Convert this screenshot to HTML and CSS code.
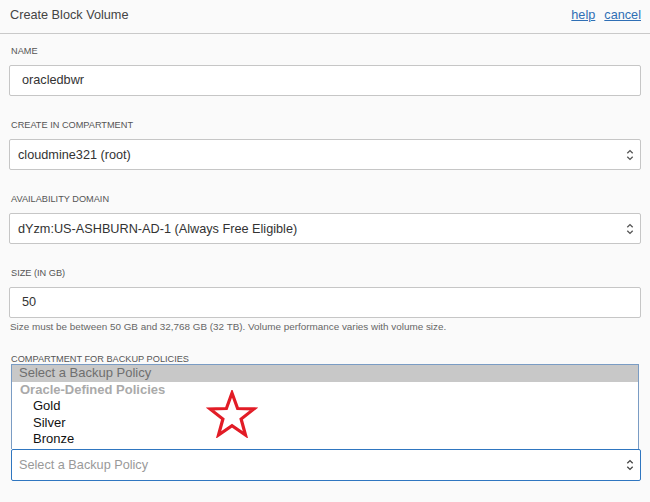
FILE: index.html
```html
<!DOCTYPE html>
<html lang="en">
<head>
    <meta charset="UTF-8">
    <meta name="viewport" content="width=device-width, initial-scale=1.0">
    <title>Create Block Volume</title>
    <link rel="stylesheet" href="styles.css">
</head>
<body>
    <div class="panel">
        <div class="panel-header">
            <p class="panel-title">Create Block Volume</p>
            <div class="header-links">
                <a href="#" class="link">help</a>
                <a href="#" class="link">cancel</a>
            </div>
        </div>
        <form class="form">
            <div class="field">
                <label class="field-label">Name</label>
                <div class="text-input">oracledbwr</div>
            </div>
            <div class="field">
                <label class="field-label">Create in Compartment</label>
                <div class="select-box">
                    <span>cloudmine321 (root)</span>
                    <svg class="chevrons" width="8" height="14" viewBox="0 0 8 14">
                        <path d="M1.3 5.3 L4 2.6 L6.7 5.3 M1.3 8.7 L4 11.4 L6.7 8.7" fill="none" stroke="#555" stroke-width="1.3"/>
                    </svg>
                </div>
            </div>
            <div class="field">
                <label class="field-label">Availability Domain</label>
                <div class="select-box">
                    <span>dYzm:US-ASHBURN-AD-1 (Always Free Eligible)</span>
                    <svg class="chevrons" width="8" height="14" viewBox="0 0 8 14">
                        <path d="M1.3 5.3 L4 2.6 L6.7 5.3 M1.3 8.7 L4 11.4 L6.7 8.7" fill="none" stroke="#555" stroke-width="1.3"/>
                    </svg>
                </div>
            </div>
            <div class="field">
                <label class="field-label">Size (in GB)</label>
                <div class="text-input">50</div>
                <p class="help-text">Size must be between 50 GB and 32,768 GB (32 TB). Volume performance varies with volume size.</p>
            </div>
            <div class="field backup-field">
                <label class="field-label">Compartment for Backup Policies</label>
                <div class="picker">
                    <ul class="option-list">
                        <li class="option selected">Select a Backup Policy</li>
                        <li class="option group">Oracle-Defined Policies</li>
                        <li class="option sub">Gold</li>
                        <li class="option sub">Silver</li>
                        <li class="option sub">Bronze</li>
                    </ul>
                    <svg class="star" width="52" height="48" viewBox="0 0 52 48">
                        <polygon points="26,3 31.6,18.5 48,18.9 35.1,29 39.5,45 26,35.6 12.5,45 16.9,29 4,18.9 20.4,18.5" fill="none" stroke="#e21c26" stroke-width="3.2"/>
                    </svg>
                    <div class="select-box focused">
                        <span class="placeholder">Select a Backup Policy</span>
                        <svg class="chevrons" width="8" height="14" viewBox="0 0 8 14">
                            <path d="M1.3 5.3 L4 2.6 L6.7 5.3 M1.3 8.7 L4 11.4 L6.7 8.7" fill="none" stroke="#444" stroke-width="1.3"/>
                        </svg>
                    </div>
                </div>
            </div>
        </form>
    </div>
</body>
</html>
```

FILE: styles.css
```css
body {
    margin: 0;
    background-color: #fafafa;
    color: #333;
    font-family: "Liberation Sans", Arial, sans-serif;
}
.panel-header {
    display: flex;
    justify-content: space-between;
    align-items: center;
    height: 33px;
    padding: 0 9px 0 10px;
    border-bottom: 1px solid #c9c9c9;
}
.panel-title {
    margin: 0;
    font-size: 12.7px;
    color: #444;
    padding-bottom: 4px;
}
.header-links {
    display: flex;
    gap: 9px;
    padding-bottom: 4px;
}
.link {
    font-size: 12.7px;
    color: #2f6fb5;
    text-decoration: underline;
}
.form {
    padding: 11px 9px 0 9px;
}
.field {
    margin-bottom: 23px;
}
.field-label {
    display: block;
    font-size: 9.2px;
    line-height: 12px;
    text-transform: uppercase;
    color: #555;
    margin: 0 0 8px 2px;
}
.text-input {
    height: 29px;
    line-height: 29px;
    background-color: #fff;
    border: 1px solid #c6c6c6;
    border-radius: 2px;
    padding: 0 12px;
    font-size: 12.7px;
    color: #333;
}
.select-box {
    display: flex;
    justify-content: space-between;
    align-items: center;
    height: 29px;
    background-color: #fff;
    border: 1px solid #c6c6c6;
    border-radius: 2px;
    padding: 0 6px 0 8px;
    font-size: 12.7px;
    color: #333;
}
.chevrons {
    display: block;
}
.help-text {
    margin: 3px 0 0 1px;
    font-size: 9.9px;
    color: #666;
}
.backup-field {
    margin-top: 22px;
}
.backup-field .field-label {
    margin-bottom: 0;
    line-height: 9px;
    height: 9px;
    overflow: hidden;
}
.picker {
    position: relative;
}
.option-list {
    list-style: none;
    margin: 0 2px;
    padding: 0;
    height: 84px;
    background-color: #fff;
    border: 1px solid #7a9cc4;
    border-bottom: none;
    font-size: 13px;
}
.option {
    height: 16.6px;
    line-height: 16px;
    padding-left: 7px;
    color: #111;
}
.option.selected {
    background-color: #c8c8c8;
    color: #6f6f6f;
}
.option.group {
    font-weight: bold;
    color: #aaa;
    padding-left: 8px;
}
.option.sub {
    padding-left: 21px;
}
.star {
    position: absolute;
    left: 197px;
    top: 26px;
}
.select-box.focused {
    margin-left: 2px;
    border: 1px solid #2f76c0;
    padding-left: 7px;
    height: 30px;
}
.placeholder {
    color: #999;
}
```
